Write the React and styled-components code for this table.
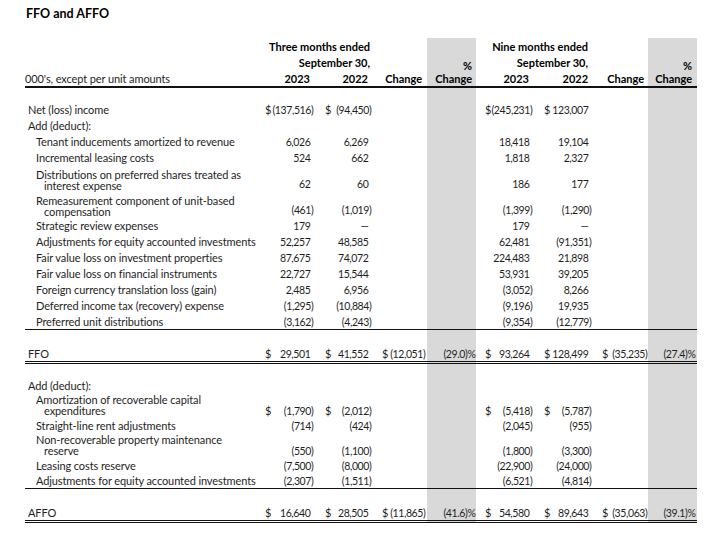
import styled, { createGlobalStyle } from "styled-components";

const GlobalStyle = createGlobalStyle`
  body {
    margin: 0;
    background: #fff;
    font-family: Lato, "Liberation Sans", sans-serif;
    color: #1e1e1e;
  }
`;

// column geometry: width, left padding, right padding (for bracketed values)
const COLS = [
  { w: 54, pl: 3, pr: 3 },
  { w: 58, pl: 9, pr: 3 },
  { w: 53, pl: 8, pr: 2 },
  { w: 49, pl: 4, pr: 1, shade: true },
  { w: 62, pl: 9, pr: 6 },
  { w: 56, pl: 6, pr: 3 },
  { w: 54, pl: 8, pr: 1 },
  { w: 49, pl: 4, pr: 2, shade: true },
];

const ROWS = [
  { spacer: 13 },
  { label: ["Net (loss) income"], v: ["$ (137,516)", "$ (94,450)", "", "", "$ (245,231)", "$ 123,007"] },
  { label: ["Add (deduct):"] },
  { label: ["Tenant inducements amortized to revenue"], lv: 1, v: ["6,026", "6,269", "", "", "18,418", "19,104"] },
  { label: ["Incremental leasing costs"], lv: 1, v: ["524", "662", "", "", "1,818", "2,327"] },
  { label: ["Distributions on preferred shares treated as", "interest expense"], lv: 1, h: 26, lh: 11, v: ["62", "60", "", "", "186", "177"] },
  { label: ["Remeasurement component of unit-based", "compensation"], lv: 1, h: 26, lh: 11, v: ["(461)", "(1,019)", "", "", "(1,399)", "(1,290)"] },
  { label: ["Strategic review expenses"], lv: 1, v: ["179", "—", "", "", "179", "—"] },
  { label: ["Adjustments for equity accounted investments"], lv: 1, v: ["52,257", "48,585", "", "", "62,481", "(91,351)"] },
  { label: ["Fair value loss on investment properties"], lv: 1, v: ["87,675", "74,072", "", "", "224,483", "21,898"] },
  { label: ["Fair value loss on financial instruments"], lv: 1, v: ["22,727", "15,544", "", "", "53,931", "39,205"] },
  { label: ["Foreign currency translation loss (gain)"], lv: 1, v: ["2,485", "6,956", "", "", "(3,052)", "8,266"] },
  { label: ["Deferred income tax (recovery) expense"], lv: 1, v: ["(1,295)", "(10,884)", "", "", "(9,196)", "19,935"] },
  { label: ["Preferred unit distributions"], lv: 1, h: 17, rule: "single", v: ["(3,162)", "(4,243)", "", "", "(9,354)", "(12,779)"] },
  { spacer: 15 },
  { label: ["FFO"], h: 19, rule: "double", v: ["$ 29,501", "$ 41,552", "$ (12,051)", "(29.0)%", "$ 93,264", "$ 128,499", "$ (35,235)", "(27.4)%"] },
  { spacer: 14 },
  { label: ["Add (deduct):"], h: 15 },
  { label: ["Amortization of recoverable capital", "expenditures"], lv: 1, h: 25, lh: 10.5, lpb: 2, v: ["$ (1,790)", "$ (2,012)", "", "", "$ (5,418)", "$ (5,787)"] },
  { label: ["Straight-line rent adjustments"], lv: 1, h: 15, v: ["(714)", "(424)", "", "", "(2,045)", "(955)"] },
  { label: ["Non-recoverable property maintenance", "reserve"], lv: 1, h: 25, lh: 10.5, lpb: 2, v: ["(550)", "(1,100)", "", "", "(1,800)", "(3,300)"] },
  { label: ["Leasing costs reserve"], lv: 1, h: 15, v: ["(7,500)", "(8,000)", "", "", "(22,900)", "(24,000)"] },
  { label: ["Adjustments for equity accounted investments"], lv: 1, h: 16, rule: "single", v: ["(2,307)", "(1,511)", "", "", "(6,521)", "(4,814)"] },
  { spacer: 15 },
  { label: ["AFFO"], h: 19, rule: "double", v: ["$ 16,640", "$ 28,505", "$ (11,865)", "(41.6)%", "$ 54,580", "$ 89,643", "$ (35,063)", "(39.1)%"] },
];

export default function App() {
  return (
    <Page>
      <GlobalStyle />
      <Title>FFO and AFFO</Title>
      <Table>
        <colgroup>
          <col style={{ width: 237 }} />
          {COLS.map((c, i) => (
            <col key={i} style={{ width: c.w }} />
          ))}
        </colgroup>
        <tbody>
          <Row>
            <td />
            <HeadCell colSpan={2} $pr={COLS[1].pr + 1}>Three months ended</HeadCell>
            <td />
            <Shade />
            <HeadCell colSpan={2} $pr={COLS[5].pr + 3}>Nine months ended</HeadCell>
            <td />
            <Shade />
          </Row>
          <Row>
            <td />
            <HeadCell colSpan={2} $pr={COLS[1].pr + 1}>September 30,</HeadCell>
            <td />
            <HeadCell $pr={COLS[3].pr + 3} $shade $low>%</HeadCell>
            <HeadCell colSpan={2} $pr={COLS[5].pr + 3}>September 30,</HeadCell>
            <td />
            <HeadCell $pr={COLS[7].pr + 3} $shade $low>%</HeadCell>
          </Row>
          <Row $h={18} $rule="head">
            <LabelCell $lv={0}>000's, except per unit amounts</LabelCell>
            {["2023", "2022", "Change", "Change", "2023", "2022", "Change", "Change"].map((t, i) => (
              <HeadCell key={i} $pr={COLS[i].pr + 3} $shade={COLS[i].shade}>
                {t}
              </HeadCell>
            ))}
          </Row>
          {ROWS.map((r, i) =>
            r.spacer ? (
              <Row key={i} $h={r.spacer}>
                <td />
                {COLS.map((c, j) => (c.shade ? <Shade key={j} /> : <td key={j} />))}
              </Row>
            ) : (
              <Row key={i} $h={r.h} $rule={r.rule}>
                <LabelCell $lv={r.lv || 0} $pb={r.lpb || 0}>
                  {r.label.map((t, j) => (
                    <LabelLine key={j} $cont={j > 0} $lh={r.lh}>
                      {t}
                    </LabelLine>
                  ))}
                </LabelCell>
                {COLS.map((c, j) => {
                  const raw = (r.v && r.v[j]) || "";
                  const dollar = raw.startsWith("$");
                  const num = dollar ? raw.slice(1).trim() : raw;
                  const hang = num !== "" && !num.endsWith(")") && !num.endsWith("%");
                  return (
                    <ValueCell key={j} $pl={c.pl} $pr={c.pr} $shade={c.shade}>
                      <Amount $hang={hang}>
                        <span>{dollar ? "$" : ""}</span>
                        <Figure>{num}</Figure>
                      </Amount>
                    </ValueCell>
                  );
                })}
              </Row>
            )
          )}
        </tbody>
      </Table>
    </Page>
  );
}

const Page = styled.div`
  width: 720px;
  height: 540px;
  box-sizing: border-box;
  padding: 6px 0 0 25px;
  overflow: hidden;
`;

const Title = styled.h1`
  margin: 0 0 16px 1px;
  font-size: 12.5px;
  line-height: 16px;
  font-weight: 700;
  color: #000;
`;

const Table = styled.table`
  width: 672px;
  table-layout: fixed;
  border-collapse: separate;
  border-spacing: 0;
  font-size: 11px;

  td,
  th {
    padding: 0;
    line-height: 14px;
  }
`;

const Row = styled.tr`
  height: ${(p) => p.$h || 16}px;

  & > td,
  & > th {
    border-bottom: ${(p) =>
      p.$rule === "double"
        ? "3px double #111"
        : p.$rule === "single"
        ? "1px solid #111"
        : p.$rule === "head"
        ? "2px solid #111"
        : "none"};
  }
`;

const Shade = styled.td`
  background: #d9d9d9;
`;

const HeadCell = styled.th`
  padding: 0 ${(p) => p.$pr}px 0 0 !important;
  text-align: right;
  vertical-align: bottom;
  line-height: ${(p) => (p.$low ? 8 : 14)}px !important;
  font-weight: 700;
  color: #000;
  white-space: nowrap;
  background: ${(p) => (p.$shade ? "#d9d9d9" : "transparent")};
`;

const LabelCell = styled.td`
  padding: 0 0 ${(p) => p.$pb}px ${(p) => (p.$lv ? 11 : 3)}px !important;
  vertical-align: bottom;
  white-space: nowrap;
  letter-spacing: -0.1px;
`;

const LabelLine = styled.div`
  line-height: ${(p) => (p.$lh ? `${p.$lh}px` : "inherit")};
  padding-left: ${(p) => (p.$cont ? 8 : 0)}px;
`;

const ValueCell = styled.td`
  padding: 0 ${(p) => p.$pr}px 0 ${(p) => p.$pl}px !important;
  vertical-align: bottom;
  background: ${(p) => (p.$shade ? "#d9d9d9" : "transparent")};
`;

const Amount = styled.div`
  display: flex;
  justify-content: space-between;
  align-items: baseline;
  white-space: nowrap;
  padding-right: ${(p) => (p.$hang ? 3 : 0)}px;
`;

const Figure = styled.span`
  font-size: 10.5px;
  letter-spacing: -0.4px;
  margin-right: -0.4px;
`;
